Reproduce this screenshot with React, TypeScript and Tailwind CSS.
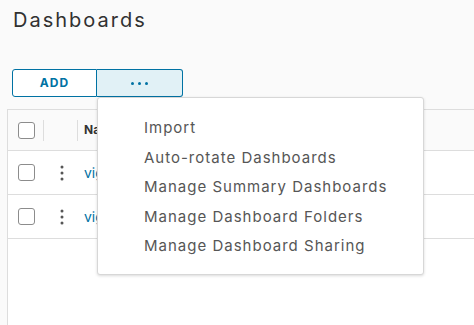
import React from "react";

function Checkbox() {
  return <div className="w-[17px] h-[17px] rounded-[3px] border border-[#8c8c8c] bg-white" />;
}

function Kebab() {
  return (
    <svg width="4" height="16" viewBox="0 0 4 16" className="text-[#565656]">
      <circle cx="2" cy="2" r="1.5" fill="currentColor" />
      <circle cx="2" cy="8" r="1.5" fill="currentColor" />
      <circle cx="2" cy="14" r="1.5" fill="currentColor" />
    </svg>
  );
}

export default function App() {
  const items = [
    "Import",
    "Auto-rotate Dashboards",
    "Manage Summary Dashboards",
    "Manage Dashboard Folders",
    "Manage Dashboard Sharing",
  ];
  return (
    <div
      className="w-[474px] h-[325px] overflow-hidden bg-[#fafafa] relative"
      style={{ fontFamily: "Inter, 'Open Sans', sans-serif" }}
    >
      <div className="pl-[13px] pt-[6px] h-[40px] text-[20px] leading-[28px] tracking-[2px] text-[#313131]">Dashboards</div>
      <div className="pl-[12px] mt-[29px] flex">
        <button className="w-[85px] h-[28px] border border-[#0072a3] rounded-l-[3px] bg-white text-[#0072a3] text-[12px] font-bold tracking-[1px] flex items-center justify-center">
          ADD
        </button>
        <button className="w-[86px] h-[28px] border border-l-0 border-[#0072a3] rounded-r-[3px] bg-[#e1f1f6] flex items-center justify-center gap-[4px]">
          <span className="w-[3px] h-[3px] rounded-full bg-[#0072a3]" />
          <span className="w-[3px] h-[3px] rounded-full bg-[#0072a3]" />
          <span className="w-[3px] h-[3px] rounded-full bg-[#0072a3]" />
        </button>
      </div>
      <div className="ml-[7px] mt-[12px] border-l border-t border-[#ddd] bg-white">
        <div className="h-[41px] bg-[#fafafa] border-b border-[#ddd] flex items-center">
          <div className="w-[27px] flex justify-end"><Checkbox /></div>
          <div className="w-[1px] h-[21px] bg-[#ddd] ml-[8px]" />
          <div className="w-[33px]" />
          <div className="w-[1px] h-[21px] bg-[#ddd]" />
          <div className="ml-[6px] whitespace-nowrap text-[12px] font-bold text-[#333]">Name</div>
        </div>
        {[0, 1].map((i) => (
          <div key={i} className="h-[44px] border-b border-[#ddd] flex items-center">
            <div className="w-[27px] flex justify-end"><Checkbox /></div>
            <div className="w-[25px]" />
            <Kebab />
            <div className="ml-[20px] whitespace-nowrap text-[14px] text-[#0072a3]">vigitest</div>
          </div>
        ))}
        <div className="h-[100px]" />
      </div>
      <div className="absolute left-[97px] top-[97px] w-[327px] h-[178px] bg-white border border-[#d7d7d7] rounded-[3px] shadow-[0_1px_3px_rgba(0,0,0,0.15)] pt-[15px] pl-[46px]">
        {items.map((t) => (
          <div key={t} className="h-[29.5px] leading-[29.5px] text-[15px] tracking-[1px] text-[#565656] whitespace-nowrap">
            {t}
          </div>
        ))}
      </div>
    </div>
  );
}
